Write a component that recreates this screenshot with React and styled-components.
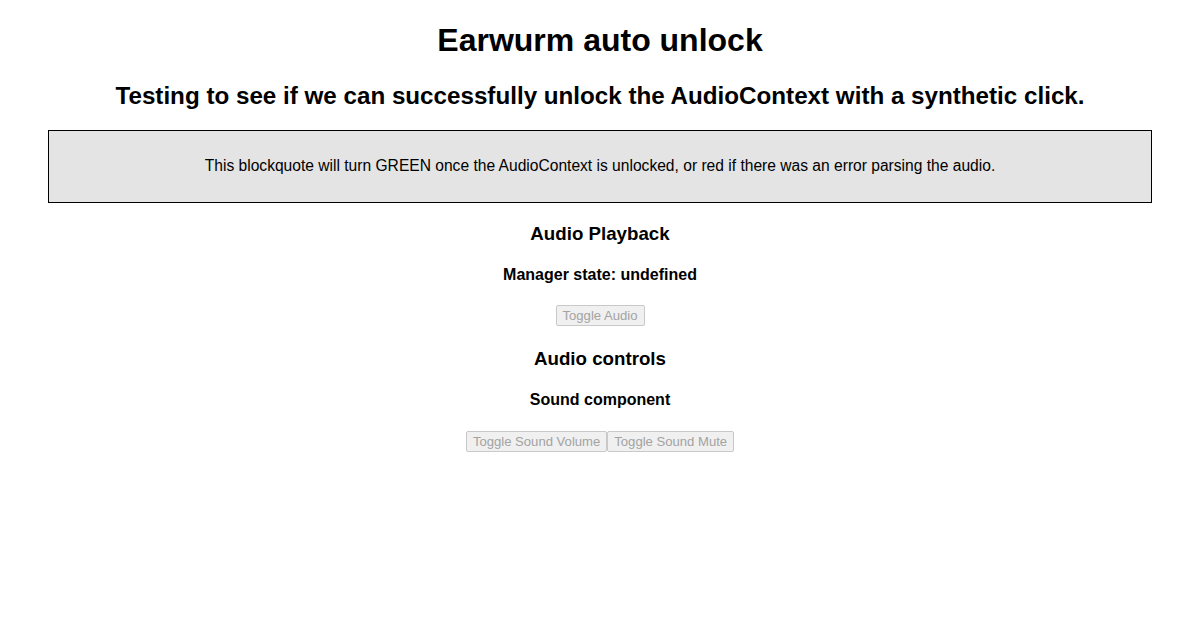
import React from 'react';
import styled, { createGlobalStyle } from 'styled-components';

const GlobalStyle = createGlobalStyle`
  body {
    margin: 0 8px;
    font-family: "Liberation Sans", Arial, sans-serif;
    color: #000;
    background: #fff;
  }
`

const Page = styled.main`
  text-align: center;
  padding-bottom: 8px;
`
const Title = styled.h1`
  font-size: 32px;
  margin: 22.4px 0;
`
const Subtitle = styled.h2`
  font-size: 24.2px;
  margin: 19.92px 0;
`
const Notice = styled.blockquote`
  margin: 16px 40px;
  padding: 10.5px 10px;
  border: 1px solid #000;
  background-color: #e4e4e4;
`
const NoticeText = styled.p`
  margin: 16px 0;
  font-size: 15.6px;
`
const Section = styled.section``
const SectionTitle = styled.h3`
  font-size: 18.72px;
  margin: ${(p) => (p.$first ? '20.2px' : '21.6px')} 0 19.7px;
`
const Label = styled.h4`
  font-size: 16px;
  margin: 21.28px 0;
`
const Controls = styled.div`
  display: flex;
  justify-content: center;
`
const Button = styled.button`
  font-family: "Liberation Sans", Arial, sans-serif;
  font-size: 13.1px;
  padding: 1px 6px;
  height: 21px;
  color: #a3a3a3;
  background-color: #f0f0f0;
  border: 1px solid #c9c9c9;
  border-radius: 2px;
`

const App = () => {
  return (
    <Page>
      <GlobalStyle />
      <Title>Earwurm auto unlock</Title>
      <Subtitle>Testing to see if we can successfully unlock the AudioContext with a synthetic click.</Subtitle>
      <Notice>
        <NoticeText>
          This blockquote will turn GREEN once the AudioContext is unlocked, or red if there was an error parsing the audio.
        </NoticeText>
      </Notice>
      <Section>
        <SectionTitle $first>Audio Playback</SectionTitle>
        <Label>Manager state: undefined</Label>
        <Controls>
          <Button disabled>Toggle Audio</Button>
        </Controls>
      </Section>
      <Section>
        <SectionTitle>Audio controls</SectionTitle>
        <Label>Sound component</Label>
        <Controls>
          <Button disabled>Toggle Sound Volume</Button>
          <Button disabled>Toggle Sound Mute</Button>
        </Controls>
      </Section>
    </Page>
  )
}

export default App
